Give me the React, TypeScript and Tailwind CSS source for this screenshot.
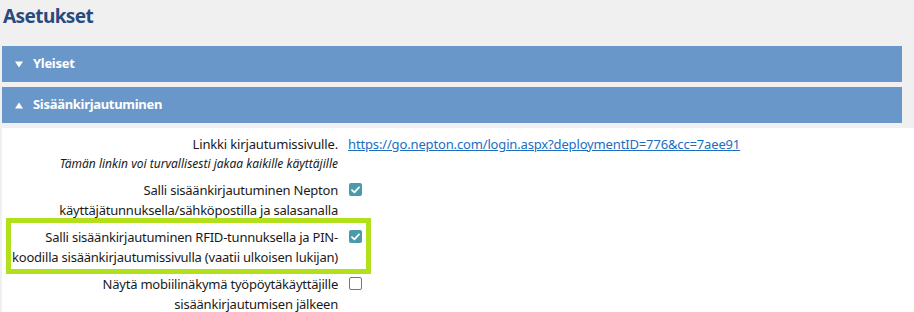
import React from "react";

function Check({ checked }: { checked: boolean }) {
  if (checked) {
    return (
      <span className="flex h-[13px] w-[13px] items-center justify-center rounded-[2px] bg-[#4a9aad]">
        <svg width="9" height="8" viewBox="0 0 9 8">
          <path d="M1 4.2 L3.4 6.4 L8 1.4" fill="none" stroke="#fff" strokeWidth="1.8" strokeLinecap="round" strokeLinejoin="round" />
        </svg>
      </span>
    );
  }
  return <span className="block h-[13px] w-[13px] rounded-[2px] border border-[#767676] bg-white" />;
}

function Bar({ title, open }: { title: string; open: boolean }) {
  return (
    <div className="mr-[12px] ml-[2px] flex h-[36px] items-center bg-[#6a97c9] pl-[13px] text-white">
      <svg width="8" height="7" viewBox="0 0 8 7" className="mr-[10px]">
        {open ? <path d="M0 6.5 L4 0.5 L8 6.5 Z" fill="#fff" /> : <path d="M0 0.5 L8 0.5 L4 6.5 Z" fill="#fff" />}
      </svg>
      <span className="text-[13px] font-bold tracking-[-0.3px]">{title}</span>
    </div>
  );
}

function Row({ lines, checked, highlight }: { lines: string[]; checked: boolean; highlight?: boolean }) {
  return (
    <div className="relative grid grid-cols-[330px_1fr] gap-x-[11px] pl-[6px]">
      {highlight && (
        <div className="pointer-events-none absolute top-[-9px] bottom-[-7px] left-[4px] w-[365px] border-[5px] border-[#b3e01c]" />
      )}
      <div className="flex flex-col items-end text-[13px] leading-[20px] tracking-[-0.22px] text-[#1a1a1a]">
        {lines.map((l) => (
          <span key={l} className="whitespace-nowrap">
            {l}
          </span>
        ))}
      </div>
      <div className="pt-[3px]">
        <Check checked={checked} />
      </div>
    </div>
  );
}

export default function App() {
  return (
    <div className="min-h-[312px] bg-[#f0f0f0] font-['Noto_Sans','Open_Sans',sans-serif]">
      <div className="h-[46px] pl-[3px] pt-[1px]">
        <h1 className="text-[19px] font-bold leading-[30px] tracking-[-0.6px] text-[#284a7e]">Asetukset</h1>
      </div>
      <Bar title="Yleiset" open={false} />
      <div className="h-[5px]" />
      <Bar title="Sisäänkirjautuminen" open={true} />
      <div className="ml-[2px] mt-[5px] flex flex-col gap-[7px] bg-white pt-[6px] pb-[10px]">
        <div className="grid grid-cols-[330px_1fr] gap-x-[10px] pl-[6px]">
          <div className="text-right">
            <div className="text-[13px] leading-[20px] tracking-[-0.15px] text-[#1a1a1a]">Linkki kirjautumissivulle.</div>
            <div className="text-[12px] italic leading-[19px] text-[#1a1a1a]">Tämän linkin voi turvallisesti jakaa kaikille käyttäjille</div>
          </div>
          <div className="text-[13px] leading-[20px] tracking-[-0.15px]">
            <a href="#" className="text-[#1b6ec2] underline">https://go.nepton.com/login.aspx?deploymentID=776&amp;cc=7aee91</a>
          </div>
        </div>
        <Row lines={["Salli sisäänkirjautuminen Nepton", "käyttäjätunnuksella/sähköpostilla ja salasanalla"]} checked={true} />
        <Row
          lines={["Salli sisäänkirjautuminen RFID-tunnuksella ja PIN-", "koodilla sisäänkirjautumissivulla (vaatii ulkoisen lukijan)"]}
          checked={true}
          highlight
        />
        <Row lines={["Näytä mobiilinäkymä työpöytäkäyttäjille", "sisäänkirjautumisen jälkeen"]} checked={false} />
      </div>
    </div>
  );
}
